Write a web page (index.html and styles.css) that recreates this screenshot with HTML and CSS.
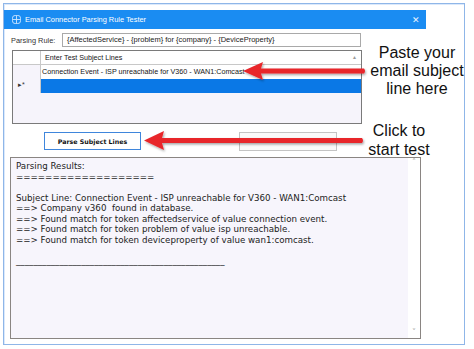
FILE: index.html
```html
<!DOCTYPE html>
<html>
<head>
<meta charset="utf-8">
<link rel="stylesheet" href="styles.css">
</head>
<body>
<div class="frame">
  <div class="window">
    <div class="titlebar">
      <svg class="appicon" width="9" height="9" viewBox="0 0 10 10"><rect x="0.5" y="0.5" width="9" height="9" rx="3" fill="none" stroke="#cfe6ff" stroke-width="1"/><path d="M5 1v8M1 5h8" stroke="#cfe6ff" stroke-width="1"/></svg>
      <span class="title">Email Connector Parsing Rule Tester</span>
      <span class="close">✕</span>
    </div>
    <div class="rulerow">
      <span class="label">Parsing Rule:</span>
      <div class="input">{AffectedService} - {problem} for {company} - {DeviceProperty}</div>
    </div>
    <div class="grid">
      <div class="grow head">
        <div class="rh"></div>
        <div class="cell">Enter Test Subject Lines</div>
        <span class="sortarrow">▲</span>
      </div>
      <div class="grow">
        <div class="rh"></div>
        <div class="cell white">Connection Event - ISP unreachable for V360 - WAN1:Comcast</div>
      </div>
      <div class="grow sel">
        <div class="rh"><span class="marker">▸*</span></div>
        <div class="cell blue"></div>
      </div>
    </div>
    <div class="btnrow">
      <button class="btn">Parse Subject Lines</button>
      <div class="ghost"></div>
    </div>
    <div class="results">
      <div class="restext">Parsing Results:
===================

Subject Line: Connection Event - ISP unreachable for V360 - WAN1:Comcast
==&gt; Company v360  found in database.
==&gt; Found match for token affectedservice of value connection event.
==&gt; Found match for token problem of value isp unreachable.
==&gt; Found match for token deviceproperty of value wan1:comcast.

________________________________________________</div>
      <div class="vscroll"><span class="up">˄</span><span class="down">˅</span></div>
    </div>
  </div>
  <div class="note note1">Paste your<br>email subject<br>line here</div>
  <div class="note note2">Click to<br>start test</div>
  <svg class="arrows" width="474" height="349" viewBox="0 0 474 349">
    <defs>
      <filter id="sh" x="-10%" y="-50%" width="120%" height="200%">
        <feDropShadow dx="1" dy="1.5" stdDeviation="1" flood-color="#000" flood-opacity="0.35"/>
      </filter>
    </defs>
    <g fill="#e8262b" filter="url(#sh)">
      <path d="M243 71 L263 62 L261 68.5 L364 68.5 Q366 71 364 73.5 L261 73.5 L263 80 Z"/>
      <path d="M144 140.5 L164 131 L162 138 L362 138 Q364 140.5 362 143 L162 143 L164 150 Z"/>
    </g>
  </svg>
</div>
</body>
</html>
```
FILE: styles.css
```css
html, body {
  margin: 0;
  padding: 0;
  background: #ffffff;
}
body {
  width: 474px;
  height: 349px;
  overflow: hidden;
  position: relative;
}
.frame {
  position: absolute;
  left: 3px;
  top: 3px;
  width: 460px;
  height: 340px;
  border: 1px solid #8fb6e8;
  box-shadow: inset 1px 1px 0 #dbe9fb;
  background: #fff;
}
.window {
  width: 422px;
  display: flex;
  flex-direction: column;
  padding-top: 6px;
  font-family: "Liberation Sans", Arial, sans-serif;
  font-size: 7.2px;
  color: #161616;
}
.titlebar {
  height: 19px;
  background: #1a8cf2;
  display: flex;
  align-items: center;
  color: #fff;
  font-size: 7.4px;
}
.appicon {
  margin-left: 8px;
  margin-right: 4px;
}
.title {
  flex: 1;
}
.close {
  margin-right: 6px;
  font-size: 9px;
  color: #e8f3ff;
}
.rulerow {
  display: flex;
  align-items: center;
  margin-top: 4px;
  height: 14px;
}
.label {
  margin-left: 7px;
  width: 51px;
  color: #333;
  font-size: 7.4px;
}
.input {
  width: 293px;
  height: 12px;
  border: 1px solid #a9a9a9;
  line-height: 12px;
  padding-left: 4px;
  color: #222;
  background: #fff;
  white-space: nowrap;
  overflow: hidden;
  font-size: 7.5px;
}
.grid {
  margin-top: 3px;
  margin-left: 8px;
  width: 348px;
  height: 72px;
  border: 1px solid #7a7a7a;
  background: #f6f4fb;
  position: relative;
}
.grow {
  display: flex;
  height: 14px;
}
.grow.head {
  background: #fff;
  border-bottom: 1px solid #c8c8c8;
  height: 13px;
}
.rh {
  width: 27px;
  border-right: 1px solid #c8c8c8;
  background: #f6f4fb;
  position: relative;
}
.head .rh {
  background: #fff;
}
.cell {
  flex: 1;
  line-height: 14px;
  padding-left: 1px;
  white-space: nowrap;
  overflow: hidden;
}
.head .cell {
  padding-left: 4px;
  line-height: 13px;
}
.cell.white {
  background: #fff;
}
.cell.blue {
  background: #0a78e6;
}
.sortarrow {
  position: absolute;
  right: 4px;
  top: 3px;
  font-size: 5px;
  color: #9a9a9a;
}
.marker {
  position: absolute;
  left: 5px;
  top: 2px;
  font-size: 7px;
  color: #333;
}
.btnrow {
  display: flex;
  margin-top: 8px;
  height: 18px;
}
.btn {
  margin: 0 0 0 40px;
  width: 97px;
  height: 18px;
  border: 1px solid #3f86dc;
  background: #fff;
  font-family: "DejaVu Sans", sans-serif;
  font-weight: bold;
  font-size: 6.3px;
  color: #111;
  padding: 0;
}
.ghost {
  margin-left: 98px;
  width: 96px;
  height: 17px;
  border: 1px solid #c4c4c4;
  background: #fafafa;
}
.results {
  margin-top: 7px;
  margin-left: 6px;
  width: 409px;
  height: 180px;
  border: 1px solid #8a8582;
  background: #f7f5fc;
  display: flex;
}
.restext {
  flex: 1;
  white-space: pre;
  font-family: "DejaVu Sans", sans-serif;
  font-size: 8.7px;
  line-height: 10.5px;
  color: #222;
  padding: 3px 0 0 5px;
  overflow: hidden;
}
.vscroll {
  width: 12px;
  background: #fff;
  display: flex;
  flex-direction: column;
  justify-content: space-between;
  align-items: center;
  color: #aaa;
  font-size: 8px;
  font-family: "DejaVu Sans", sans-serif;
  line-height: 10px;
}
.note {
  position: absolute;
  font-family: "Liberation Sans", Arial, sans-serif;
  font-size: 16px;
  line-height: 18px;
  color: #111;
  text-align: center;
}
.note1 {
  left: 358px;
  top: 40px;
  width: 110px;
}
.note2 {
  left: 352px;
  top: 117px;
  width: 86px;
  line-height: 19px;
}
.arrows {
  position: absolute;
  left: -4px;
  top: -4px;
  pointer-events: none;
}
```
